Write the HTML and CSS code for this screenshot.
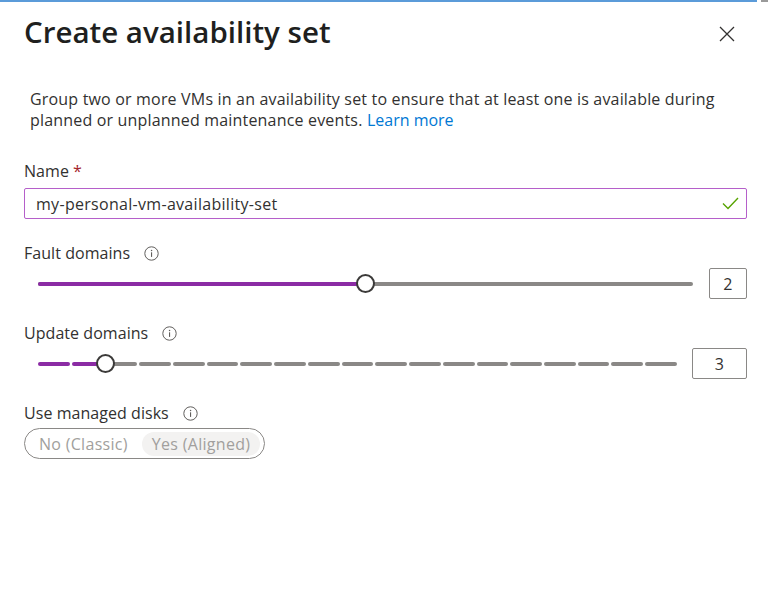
FILE: index.html
```html
<!DOCTYPE html>
<html lang="en">
<head>
<meta charset="utf-8">
<title>Create availability set</title>
<link rel="stylesheet" href="styles.css">
</head>
<body>
<div class="topline"><span class="line-main"></span><span class="line-end"></span></div>
<div class="panel">
  <header class="header">
    <h1 class="title">Create availability set</h1>
    <button class="close" aria-label="Close">
      <svg width="16" height="16" viewBox="0 0 16 16"><path d="M1 1L15 15M15 1L1 15" stroke="#323130" stroke-width="1.3" fill="none"/></svg>
    </button>
  </header>

  <div class="desc">
    <div class="desc-line">Group two or more VMs in an availability set to ensure that at least one is available during</div>
    <div class="desc-line">planned or unplanned maintenance events. <a href="#" class="link">Learn more</a></div>
  </div>

  <div class="field">
    <div class="label label-name">Name <span class="req">*</span></div>
    <div class="input">
      <span class="input-text">my-personal-vm-availability-set</span>
      <svg class="check" width="17" height="13" viewBox="0 0 17 13"><path d="M1 6.5L6 11.5L16 1" stroke="#57a300" stroke-width="1.4" fill="none"/></svg>
    </div>
  </div>

  <div class="field">
    <div class="label">Fault domains <svg class="info" width="15" height="15" viewBox="0 0 15 15"><circle cx="7.5" cy="7.5" r="6.7" stroke="#605e5c" stroke-width="1" fill="none"/><rect x="7" y="6.3" width="1.1" height="4.6" fill="#605e5c"/><circle cx="7.55" cy="4.5" r="0.75" fill="#605e5c"/></svg></div>
    <div class="slider-row">
      <div class="track track-solid">
        <div class="fill" style="width:50%"></div>
        <div class="thumb" style="left:50%"></div>
      </div>
      <div class="valbox valbox-sm">2</div>
    </div>
  </div>

  <div class="field">
    <div class="label">Update domains <svg class="info" width="15" height="15" viewBox="0 0 15 15"><circle cx="7.5" cy="7.5" r="6.7" stroke="#605e5c" stroke-width="1" fill="none"/><rect x="7" y="6.3" width="1.1" height="4.6" fill="#605e5c"/><circle cx="7.55" cy="4.5" r="0.75" fill="#605e5c"/></svg></div>
    <div class="slider-row">
      <div class="track track-seg">
        <span class="seg on"></span><span class="seg on"></span><span class="seg"></span><span class="seg"></span><span class="seg"></span><span class="seg"></span><span class="seg"></span><span class="seg"></span><span class="seg"></span><span class="seg"></span><span class="seg"></span><span class="seg"></span><span class="seg"></span><span class="seg"></span><span class="seg"></span><span class="seg"></span><span class="seg"></span><span class="seg"></span><span class="seg"></span>
        <div class="thumb" style="left:10.55%"></div>
      </div>
      <div class="valbox valbox-lg">3</div>
    </div>
  </div>

  <div class="field">
    <div class="label">Use managed disks <svg class="info" width="15" height="15" viewBox="0 0 15 15"><circle cx="7.5" cy="7.5" r="6.7" stroke="#605e5c" stroke-width="1" fill="none"/><rect x="7" y="6.3" width="1.1" height="4.6" fill="#605e5c"/><circle cx="7.55" cy="4.5" r="0.75" fill="#605e5c"/></svg></div>
    <div class="toggle">
      <span class="opt">No (Classic)</span>
      <span class="opt opt-sel">Yes (Aligned)</span>
    </div>
  </div>
</div>
</body>
</html>
```
FILE: styles.css
```css
* { box-sizing: border-box; }
html, body { margin: 0; padding: 0; background: #ffffff; }
body {
  width: 768px;
  height: 594px;
  overflow: hidden;
  font-family: "Open Sans", "Noto Sans", "Liberation Sans", sans-serif;
  color: #323130;
  font-size: 16px;
  letter-spacing: 0.3px;
}
.topline { display: flex; gap: 4px; height: 2px; }
.line-main { width: 757px; background: #5b9bd9; }
.line-end { flex: 1; background: #9a9a9a; }

.panel { padding: 12px 21px 0 24px; }

.header { display: flex; align-items: center; justify-content: space-between; height: 36px; }
.title { margin: 0; font-size: 29.5px; line-height: 36px; font-weight: 600; color: #201f1e; letter-spacing: 0; }
.close { border: 0; background: none; padding: 0; margin: 4px 12px 0 0; width: 16px; height: 16px; display: flex; cursor: pointer; }

.desc { margin: 39px 0 30px 6px; font-size: 16px; line-height: 21px; letter-spacing: 0.18px; color: #323130; }
.desc-line { white-space: nowrap; height: 21px; }
.link { color: #0078d4; text-decoration: none; letter-spacing: 0; }

.field { margin-bottom: 24px; }
.label { display: flex; align-items: center; height: 20px; line-height: 20px; margin-bottom: 5px; font-size: 16px; letter-spacing: 0.05px; color: #323130; }
.label-name { margin-bottom: 7px; }
.req { color: #a4262c; margin-left: 4px; }
.info { margin-left: 14px; }

.input {
  height: 31px;
  border: 1px solid #b55fca;
  border-radius: 2px;
  display: flex;
  align-items: center;
  justify-content: space-between;
  padding: 0 7px 0 11px;
}
.input-text { font-size: 16px; color: #323130; }

.slider-row { display: flex; align-items: center; height: 31px; padding-left: 14px; }
.track { position: relative; flex: 1; height: 4px; }
.track-solid { background: #8a8886; border-radius: 2px; }
.fill { height: 4px; background: #8b2ba4; border-radius: 2px; }
.track-seg { display: flex; gap: 2px; }
.seg { flex: 1; height: 4px; background: #8a8886; border-radius: 2px; }
.seg.on { background: #8b2ba4; }
.thumb {
  position: absolute;
  top: 50%;
  width: 19px;
  height: 19px;
  margin: -9.5px 0 0 -9.5px;
  border: 2px solid #3b3a39;
  border-radius: 50%;
  background: #ffffff;
}
.valbox {
  height: 31px;
  border: 1px solid #8a8886;
  border-radius: 2px;
  display: flex;
  align-items: center;
  justify-content: center;
  font-size: 16px;
  color: #323130;
}
.valbox-sm { width: 38px; margin-left: 16px; }
.valbox-lg { width: 55px; margin-left: 15px; }

.toggle {
  display: inline-flex;
  align-items: center;
  gap: 4px;
  height: 31px;
  padding: 0 4px;
  border: 1px solid #8a8886;
  border-radius: 16px;
}
.opt { height: 24px; line-height: 24px; padding: 0 10px; border-radius: 12px; color: #a19f9d; font-size: 16px; }
.opt-sel { background: #f3f2f1; }
```
